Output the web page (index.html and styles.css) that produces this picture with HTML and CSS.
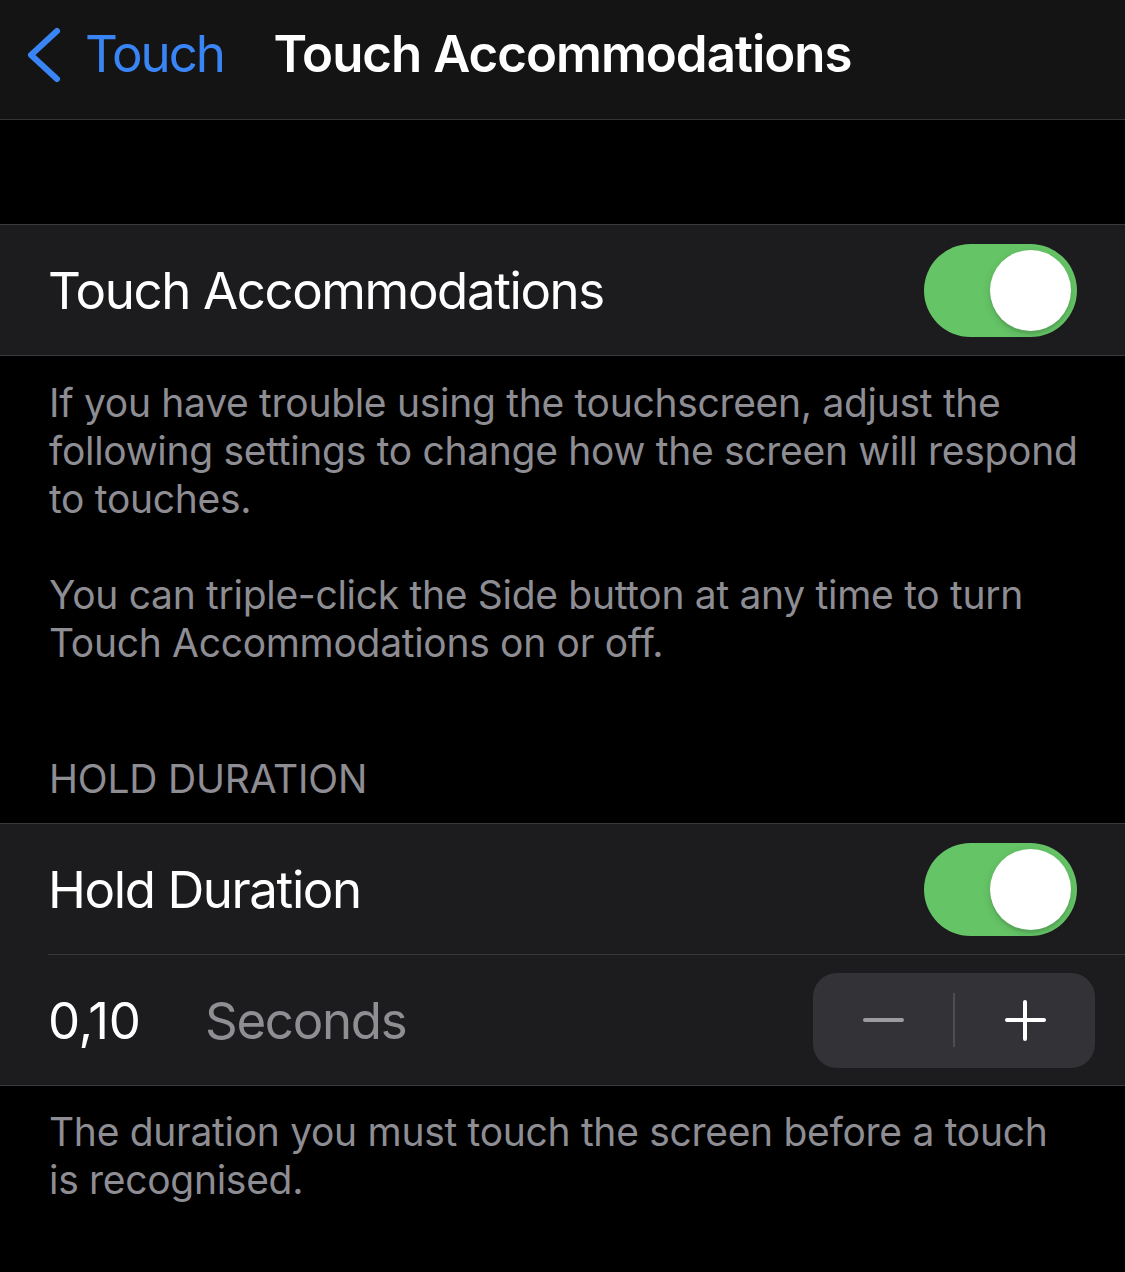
FILE: index.html
```html
<!DOCTYPE html>
<html lang="en">
<head>
  <meta charset="UTF-8">
  <meta name="viewport" content="width=device-width, initial-scale=1.0">
  <title>Touch Accommodations</title>
  <link rel="stylesheet" href="styles.css">
</head>
<body>
  <!-- Barra de navegação -->
  <header class="navbar">
    <a href="#" class="back">
      <svg class="chevron" width="40" height="62" viewBox="0 0 40 62">
        <polyline points="33,7 7,31 33,55" fill="none" stroke="currentColor" stroke-width="6" stroke-linecap="round" stroke-linejoin="round"/>
      </svg>
      <span>Touch</span>
    </a>
    <h1 class="title">Touch Accommodations</h1>
    <div></div>
  </header>

  <main class="content">
    <!-- Interruptor principal -->
    <section class="group group-first">
      <div class="row">
        <span class="label">Touch Accommodations</span>
        <label class="switch on"><span class="knob"></span></label>
      </div>
    </section>
    <div class="footer-text">
      <p>If you have trouble using the touchscreen, adjust the<br>following settings to change how the screen will respond<br>to touches.</p>
      <p>You can triple-click the Side button at any time to turn<br>Touch Accommodations on or off.</p>
    </div>

    <!-- Tempo de toque -->
    <h2 class="section-header">Hold Duration</h2>
    <section class="group">
      <div class="row">
        <span class="label">Hold Duration</span>
        <label class="switch on"><span class="knob"></span></label>
      </div>
      <div class="row row-stepper">
        <span class="value">0,10</span>
        <span class="unit">Seconds</span>
        <div class="stepper">
          <button class="step minus" aria-label="Decrease"><span class="bar"></span></button>
          <span class="step-divider"></span>
          <button class="step plus" aria-label="Increase"><span class="bar"></span><span class="bar vertical"></span></button>
        </div>
      </div>
    </section>
    <div class="footer-text footer-last">
      <p>The duration you must touch the screen before a touch<br>is recognised.</p>
    </div>
  </main>
</body>
</html>
```

FILE: styles.css
```css
body {
  margin: 0;
  background-color: #000;
  color: #fff;
  font-family: Inter, "Noto Sans", sans-serif;
}
.navbar {
  display: grid;
  grid-template-columns: 1fr auto 1fr;
  align-items: center;
  height: 106px;
  padding-bottom: 13px;
  background-color: #141414;
  border-bottom: 1px solid #363638;
}
.back {
  display: flex;
  align-items: center;
  color: #3a85f6;
  text-decoration: none;
  font-size: 51px;
  letter-spacing: -2px;
  padding-left: 24px;
}
.back .chevron {
  margin-right: 21px;
  position: relative;
  top: 2px;
}
.title {
  margin: 0;
  font-size: 51px;
  font-weight: 600;
  letter-spacing: -1px;
}
.content {
  padding-top: 104px;
}
.group {
  background-color: #1c1c1e;
  border-top: 1px solid #3a3a3c;
  border-bottom: 1px solid #3a3a3c;
}
.row {
  display: flex;
  align-items: center;
  height: 130px;
  margin-left: 48px;
  padding-right: 48px;
}
.row + .row {
  border-top: 1px solid #38383a;
}
.label {
  flex: 1;
  font-size: 51px;
  letter-spacing: -1.4px;
}
.switch {
  position: relative;
  width: 153px;
  height: 93px;
  border-radius: 47px;
  background-color: #3a3a3c;
  cursor: pointer;
}
.switch.on {
  background-color: #65c466;
}
.switch .knob {
  position: absolute;
  top: 6px;
  left: 6px;
  width: 81px;
  height: 81px;
  border-radius: 50%;
  background-color: #fff;
  box-shadow: 0 3px 9px rgba(0, 0, 0, 0.15), 0 3px 1px rgba(0, 0, 0, 0.06);
}
.switch.on .knob {
  left: 66px;
}
.value {
  width: 157px;
  font-size: 51px;
  letter-spacing: -0.4px;
}
.unit {
  flex: 1;
  font-size: 51px;
  letter-spacing: -1.3px;
  color: #8e8e93;
}
.stepper {
  display: flex;
  align-items: center;
  width: 282px;
  height: 95px;
  margin-right: -18px;
  border-radius: 24px;
  background-color: #333337;
}
.step {
  position: relative;
  flex: 1;
  height: 100%;
  border: none;
  background: none;
  padding: 0;
  cursor: pointer;
}
.step .bar {
  position: absolute;
  top: 50%;
  left: 50%;
  width: 41px;
  height: 4px;
  margin: -2px 0 0 -20px;
  border-radius: 2px;
  background-color: #fff;
}
.step .bar.vertical {
  width: 4px;
  height: 41px;
  margin: -20px 0 0 -2px;
}
.step.minus .bar {
  background-color: #9c9ca0;
}
.step-divider {
  width: 2px;
  height: 54px;
  background-color: #4e4e52;
}
.footer-text {
  padding: 23px 20px 0 49px;
  color: #8d8d93;
  font-size: 39px;
  line-height: 48px;
  letter-spacing: -0.3px;
  white-space: nowrap;
}
.footer-text p {
  margin: 0;
}
.footer-text p + p {
  margin-top: 48px;
}
.footer-last {
  padding-top: 22px;
}
.section-header {
  margin: 88px 0 20px;
  padding-left: 49px;
  font-size: 39px;
  font-weight: 400;
  line-height: 48px;
  text-transform: uppercase;
  color: #8d8d93;
  letter-spacing: -0.2px;
}
```
